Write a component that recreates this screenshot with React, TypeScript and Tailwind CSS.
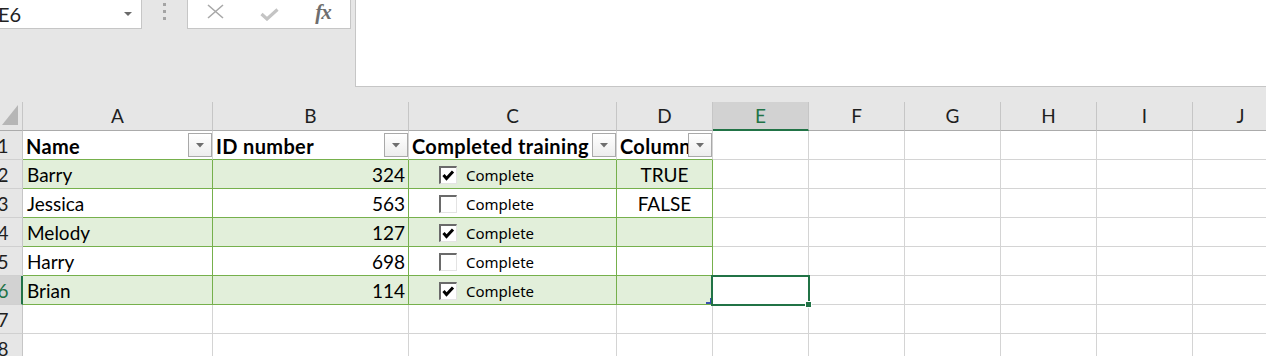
import { Fragment } from 'react'

const green = 'border-[#76b04c]'

const extraCols = ['E', 'F', 'G', 'H', 'I', 'J']

const people = [
  { name: 'Barry', id: 324, done: true, flag: 'TRUE' },
  { name: 'Jessica', id: 563, done: false, flag: 'FALSE' },
  { name: 'Melody', id: 127, done: true, flag: '' },
  { name: 'Harry', id: 698, done: false, flag: '' },
  { name: 'Brian', id: 114, done: true, flag: '' },
]

function FilterButton() {
  return (
    <div className="absolute right-0 top-[2px] w-[24px] h-[24px] border border-[#a9a9a9] bg-gradient-to-b from-white to-[#ededed] flex items-center justify-center">
      <svg width="8" height="5" viewBox="0 0 8 5">
        <path d="M0 0 L8 0 L4 4.5 Z" fill="#6e6e6e" />
      </svg>
    </div>
  )
}

function CheckBox({ checked }: { checked: boolean }) {
  return (
    <div className="w-[18px] h-[18px] shrink-0 bg-white border-t-2 border-l-2 border-t-[#6a6a6a] border-l-[#6a6a6a] border-r border-b border-r-[#e3e3e3] border-b-[#e3e3e3] flex items-center justify-center">
      {checked && (
        <svg width="13" height="12" viewBox="0 0 13 12">
          <path d="M1.5 5 L4.5 8.5 L11 1.5" fill="none" stroke="#000" strokeWidth="3" />
        </svg>
      )}
    </div>
  )
}

function RowHead({ n, active }: { n: number; active?: boolean }) {
  return (
    <div
      className={`w-[23px] h-[29px] shrink-0 overflow-hidden border-b border-[#d0d0d0] flex items-center ${
        active ? 'bg-[#d2d2d2] text-[#217346] border-r-2 border-r-[#217346]' : 'bg-[#e6e6e6] text-[#1f1f1f] border-r border-r-[#c6c6c6]'
      }`}
    >
      <div className="w-[32px] -ml-[13px] shrink-0 text-center pt-[2px]">{n}</div>
    </div>
  )
}

function EmptyCells({ selectedFirst }: { selectedFirst?: boolean }) {
  return (
    <>
      {extraCols.map((c, i) => (
        <div key={c} className="relative w-[96px] h-[29px] shrink-0 bg-white border-r border-b border-[#d4d4d4]">
          {selectedFirst && i === 0 && (
            <>
              <div className="absolute z-10 -left-[2px] -top-[1px] -right-[2px] -bottom-[2px] border-2 border-[#217346]" />
              <div className="absolute z-20 -right-[4px] -bottom-[4px] w-[7px] h-[7px] bg-[#217346] border border-white" />
            </>
          )}
        </div>
      ))}
    </>
  )
}

export default function App() {
  return (
    <div className="w-[1266px] h-[356px] overflow-hidden bg-[#e6e6e6] font-['Lato',sans-serif] text-[19px] text-black">
      {/* formula bar */}
      <div className="flex h-[102px] items-start">
        <div className="w-[355px] shrink-0 flex items-start">
          <div className="w-[142px] h-[29px] bg-white border-r border-b border-[#c6c6c6] flex items-center justify-between pr-[9px]">
            <span className="-ml-[2px] text-[20px] text-[#222]">E6</span>
            <svg width="8" height="4" viewBox="0 0 8 4">
              <path d="M0 0 L8 0 L4 4 Z" fill="#6a6a6a" />
            </svg>
          </div>
          <div className="w-[45px] h-[29px] flex flex-col items-center justify-center gap-[4px] pb-[6px]">
            <span className="w-[3px] h-[3px] bg-[#a4a4a4]" />
            <span className="w-[3px] h-[3px] bg-[#a4a4a4]" />
            <span className="w-[3px] h-[3px] bg-[#a4a4a4]" />
          </div>
          <div className="w-[164px] h-[29px] bg-white border-l border-r border-b border-[#c6c6c6] flex">
            <div className="w-[54px] flex items-center justify-center pb-[5px]">
              <svg width="17" height="15" viewBox="0 0 17 15">
                <path d="M1 1 L16 14 M16 1 L1 14" stroke="#a8a8a8" strokeWidth="1.6" />
              </svg>
            </div>
            <div className="w-[54px] flex items-center justify-center pt-[1px]">
              <svg width="19" height="13" viewBox="0 0 19 13">
                <path d="M1.5 6 L7 11 L17.5 1.5" fill="none" stroke="#c4c4c4" strokeWidth="3.2" />
              </svg>
            </div>
            <div className="w-[54px] flex items-center justify-center pb-[3px]">
              <span className="font-['Liberation_Serif',serif] italic font-bold text-[21px] text-[#6e6e6e] tracking-[-1px]">fx</span>
            </div>
          </div>
        </div>
        <div className="flex-1 h-[87px] bg-white border-l border-b border-[#c6c6c6]" />
      </div>

      {/* column headers */}
      <div className="flex h-[29px]">
        <div className="w-[23px] h-[29px] shrink-0 border-r border-b border-[#ababab] border-r-[#c6c6c6]">
          <svg width="22" height="28" viewBox="0 0 22 28">
            <path d="M18 3 L18 23 L2 23 Z" fill="#b6b6b6" />
          </svg>
        </div>
        {[
          ['A', 'w-[190px]'],
          ['B', 'w-[196px]'],
          ['C', 'w-[208px]'],
          ['D', 'w-[96px]'],
        ].map(([c, w]) => (
          <div key={c} className={`${w} shrink-0 border-r border-r-[#c6c6c6] border-b border-b-[#ababab] flex items-center justify-center pt-[1px] text-[#1f1f1f]`}>
            {c}
          </div>
        ))}
        {extraCols.map((c) => (
          <div
            key={c}
            className={`w-[96px] shrink-0 border-r border-r-[#c6c6c6] flex items-center justify-center pt-[1px] ${
              c === 'E' ? 'bg-[#d2d2d2] text-[#217346] border-b-2 border-b-[#217346]' : 'text-[#1f1f1f] border-b border-b-[#ababab]'
            }`}
          >
            {c}
          </div>
        ))}
      </div>

      {/* row 1: table header */}
      <div className="flex">
        <RowHead n={1} />
        {[
          ['Name', 'w-[190px]'],
          ['ID number', 'w-[196px]'],
          ['Completed training', 'w-[208px]'],
          ['Column1', 'w-[96px]'],
        ].map(([label, w]) => (
          <div key={label} className={`relative ${w} h-[29px] shrink-0 bg-white border-r border-r-[#d4d4d4] border-b ${green} overflow-hidden flex items-center pl-[3px] pt-[2px] font-bold text-[20px] tracking-[0.35px] whitespace-nowrap`}>
            {label}
            <FilterButton />
          </div>
        ))}
        <EmptyCells />
      </div>

      {/* data rows */}
      {people.map((p, i) => {
        const fill = i % 2 === 0 ? 'bg-[#e2efda]' : 'bg-white'
        const cell = `h-[29px] shrink-0 border-r border-b ${green} ${fill}`
        return (
          <div key={p.name} className="flex">
            <RowHead n={i + 2} active={i === 4} />
            <div className={`${cell} w-[190px] flex items-center pl-[4px] pt-[2px]`}>{p.name}</div>
            <div className={`${cell} w-[196px] flex items-center justify-end pr-[3px] pt-[2px]`}>{p.id}</div>
            <div className={`${cell} w-[208px] flex items-center pl-[30px] gap-[9px] pt-[2px]`}>
              <CheckBox checked={p.done} />
              <span className="font-['Noto_Sans',sans-serif] text-[15px] text-black">Complete</span>
            </div>
            <div className={`${cell} relative w-[96px] flex items-center justify-center pt-[2px]`}>
              {p.flag}
              {i === 4 && (
                <svg className="absolute right-0 bottom-0" width="6" height="6" viewBox="0 0 6 6">
                  <path d="M6 0 L6 6 L0 6 L0 4 L4 4 L4 0 Z" fill="#3b4fae" />
                </svg>
              )}
            </div>
            <EmptyCells selectedFirst={i === 4} />
          </div>
        )
      })}

      {/* empty rows */}
      {[7, 8].map((n) => (
        <div key={n} className="flex">
          <RowHead n={n} />
          {['w-[190px]', 'w-[196px]', 'w-[208px]', 'w-[96px]'].map((w) => (
            <Fragment key={w}>
              <div className={`${w} h-[29px] shrink-0 bg-white border-r border-b border-[#d4d4d4]`} />
            </Fragment>
          ))}
          <EmptyCells />
        </div>
      ))}
    </div>
  )
}
